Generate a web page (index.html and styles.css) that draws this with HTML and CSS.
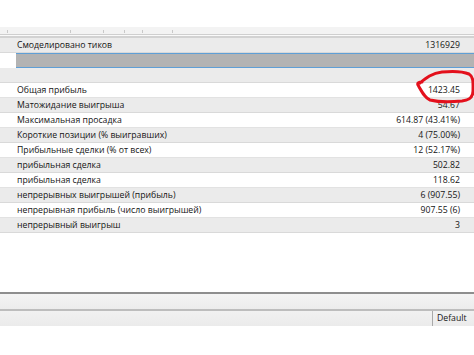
FILE: index.html
```html
<!DOCTYPE html>
<html lang="ru">
<head>
  <meta charset="UTF-8" />
  <title>Результаты тестирования</title>
  <link rel="stylesheet" href="styles.css">
</head>
<body>
  <div class="window">
    <div class="ruler"></div>
    <div class="sep"></div>
    <div class="report">
      <div class="row gray"><span class="gutter"></span><span class="label">Смоделировано тиков</span><span class="value">1316929</span></div>
      <div class="row selected"><span class="gutter"></span><span class="bar"></span></div>
      <div class="row gray"><span class="gutter"></span><span class="label"></span><span class="value"></span></div>
      <div class="row"><span class="gutter"></span><span class="label">Общая прибыль</span><span class="value">1423.45</span></div>
      <div class="row gray"><span class="gutter"></span><span class="label">Матожидание выигрыша</span><span class="value">54.67</span></div>
      <div class="row"><span class="gutter"></span><span class="label">Максимальная просадка</span><span class="value">614.87 (43.41%)</span></div>
      <div class="row gray"><span class="gutter"></span><span class="label">Короткие позиции (% выигравших)</span><span class="value">4 (75.00%)</span></div>
      <div class="row"><span class="gutter"></span><span class="label">Прибыльные сделки (% от всех)</span><span class="value">12 (52.17%)</span></div>
      <div class="row gray"><span class="gutter"></span><span class="label">прибыльная сделка</span><span class="value">502.82</span></div>
      <div class="row"><span class="gutter"></span><span class="label">прибыльная сделка</span><span class="value">118.62</span></div>
      <div class="row gray"><span class="gutter"></span><span class="label">непрерывных выигрышей (прибыль)</span><span class="value">6 (907.55)</span></div>
      <div class="row"><span class="gutter"></span><span class="label">непрерывная прибыль (число выигрышей)</span><span class="value">907.55 (6)</span></div>
      <div class="row gray"><span class="gutter"></span><span class="label">непрерывный выигрыш</span><span class="value">3</span></div>
    </div>
    <div class="blank"></div>
    <div class="panel"></div>
    <div class="status"><span class="status-item">Default</span></div>

    <!-- red marker drawn over the total profit -->
    <svg class="mark" width="64" height="36" viewBox="0 0 64 36">
      <path d="M7 14 C13 9 19 4 29 3 C39 2 49 2 56 5 C61 8 60 15 60 22 C60 28 57 31 49 32 C39 33 25 33 17 31 C12 29 9 23 5 16 C4 14 6 13 9 13" fill="none" stroke="#e3101c" stroke-width="3" stroke-linecap="round" stroke-linejoin="round"/>
    </svg>
  </div>
</body>
</html>
```

FILE: styles.css
```css
* { margin: 0; padding: 0; box-sizing: border-box; }
html, body {
  width: 100%; height: 100%;
  background: #fff;
  font-family: 'Open Sans', 'Noto Sans', sans-serif;
  color: #141414;
}
.window {
  position: relative;
  padding-top: 27px;
  height: 355px;
}
.ruler {
  height: 7px;
  background-color: #f3f3f3;
  background-image:
    linear-gradient(#c9c9c9, #c9c9c9), linear-gradient(#c9c9c9, #c9c9c9),
    linear-gradient(#c9c9c9, #c9c9c9), linear-gradient(#c9c9c9, #c9c9c9),
    linear-gradient(#c9c9c9, #c9c9c9), linear-gradient(#c9c9c9, #c9c9c9);
  background-size: 1px 3px;
  background-repeat: no-repeat;
  background-position: 7px 3px, 70px 3px, 103px 3px, 124px 3px, 142px 3px, 172px 3px;
}
.sep {
  height: 4px;
  border-top: 1px solid #cfcfcf;
  border-bottom: 2px solid #d2d2d2;
  background: #fafafa;
}
.row {
  display: grid;
  grid-template-columns: 16px 1fr auto;
  height: 15px;
  font-size: 8.7px;
  line-height: 14px;
  background: #fff;
  border-bottom: 1px solid #e2e2e2;
}
.row.gray { background: #ebebeb; border-bottom-color: #d9d9d9; }
.label { white-space: nowrap; padding-left: 1px; }
.value { padding-right: 14px; text-align: right; white-space: nowrap; }
.row.selected {
  grid-template-columns: 16px 1fr;
  background: #fff;
  border-bottom: none;
}
.bar {
  background: #b3b3b3;
  border-top: 1px solid #5f9fd6;
  border-bottom: 1px solid #5f9fd6;
}
.blank { height: 59px; }
.panel {
  height: 19px;
  border-top: 2px solid #8e8e8e;
  border-bottom: 2px solid #bdbdbd;
  background: linear-gradient(#f4f4f4, #ececec);
}
.status {
  height: 15px;
  display: flex;
  justify-content: flex-end;
  background: linear-gradient(#f1f1f1, #ebebeb);
  font-size: 8.7px;
  line-height: 15px;
}
.status-item {
  width: 42px;
  padding-left: 4px;
  border-left: 1px solid #a9a9a9;
}
.mark {
  position: absolute;
  left: 413px;
  top: 69px;
}
```
